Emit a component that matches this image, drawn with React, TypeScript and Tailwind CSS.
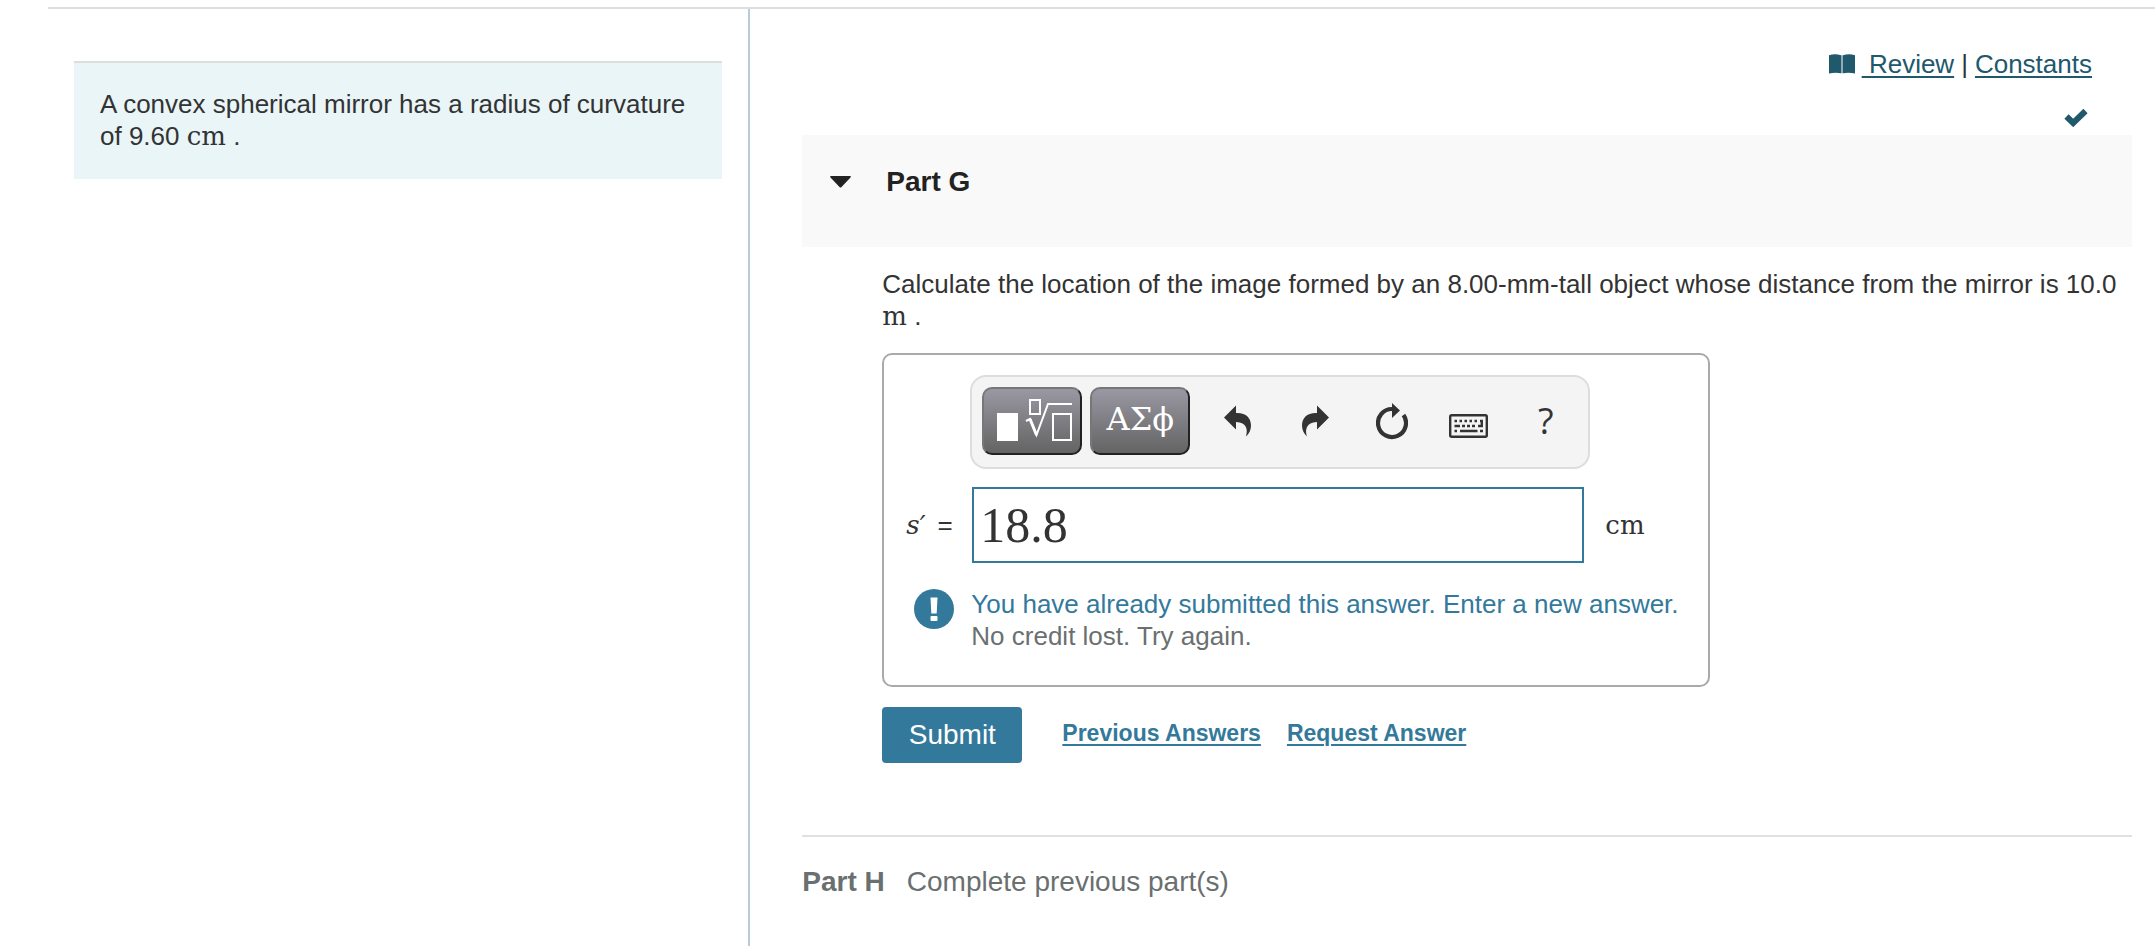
import { ReactNode, useState } from "react"

function Unit({ children }: { children: ReactNode }) {
  return <span className="font-['DejaVu_Serif',serif] text-[26px] leading-6">{children}</span>
}

function BookIcon() {
  return (
    <svg viewBox="0 0 26 20" className="h-5 w-[26px]" fill="#20586c" aria-hidden="true">
      <path d="M0 1.2Q6-.6 12 1.2V19.2Q6 18 0 19.6Z" />
      <path d="M14 1.2Q20-.6 26 1.2V19.6Q20 18 14 19.2Z" />
      <path d="M12 1.2H14V19.2H12Z" opacity="0.5" />
    </svg>
  )
}

function CheckIcon() {
  return (
    <svg viewBox="0 0 24 19" className="h-[19px] w-6" role="img" aria-label="Completed">
      <path d="M2.5 8.5L9.2 15L21.5 3" fill="none" stroke="#20586c" strokeWidth="6" strokeLinejoin="miter" />
    </svg>
  )
}

function TemplateIcon() {
  return (
    <svg viewBox="0 0 78 44" className="h-11 w-[78px]" fill="none" stroke="#fff" aria-hidden="true">
      <rect x="1" y="15" width="21" height="28" fill="#fff" stroke="none" />
      <rect x="34" y="2" width="10" height="14" strokeWidth="2" />
      <path d="M30 23L34 21L40.5 37L52 6H76" strokeWidth="2" />
      <path d="M34 21L40.5 37" strokeWidth="3" />
      <rect x="57" y="16" width="18" height="26" strokeWidth="2" />
    </svg>
  )
}

function UndoIcon() {
  return (
    <svg viewBox="0 0 28 32" className="h-8 w-7" fill="#333" aria-hidden="true">
      <path d="M0 12.5L12 .5V8C22 7.5 27 13 27 20.5C27 25 25 29 22 31.5C24 25 23 17.5 12 17V24.5Z" />
    </svg>
  )
}

function RedoIcon() {
  return (
    <svg viewBox="0 0 28 32" className="h-8 w-7" fill="#333" aria-hidden="true">
      <path d="M28 12.5L16 .5V8C6 7.5 1 13 1 20.5C1 25 3 29 6 31.5C4 25 5 17.5 16 17V24.5Z" />
    </svg>
  )
}

function ResetIcon() {
  return (
    <svg viewBox="0 0 32 38" className="h-[38px] w-8" aria-hidden="true">
      <path d="M16 7A14 14 0 1 0 27.5 13" fill="none" stroke="#333" strokeWidth="4.2" />
      <path d="M16 1L24 8.5L16 16Z" fill="#333" />
    </svg>
  )
}

function KeyboardIcon() {
  return (
    <svg viewBox="0 0 39 24" className="h-6 w-[39px]" aria-hidden="true">
      <rect x="1.2" y="1.2" width="36.6" height="21.6" rx="1.5" fill="none" stroke="#333" strokeWidth="2.4" />
      <path
        d="M5.5 7H8M10.5 7H13M15.5 7H18M20.5 7H23M25.5 7H28M31 7H34M5.5 12H11M13 12H16M18 12H21M23 12H26M29 12H34M5.5 17H8M11 17H28.5M31 17H34"
        stroke="#333"
        strokeWidth="2.4"
      />
      <path d="M32.8 6V13" stroke="#333" strokeWidth="2.4" />
    </svg>
  )
}

function AlertIcon() {
  return (
    <svg viewBox="0 0 40 40" className="h-10 w-10" aria-hidden="true">
      <circle cx="20" cy="20" r="20" fill="#33799b" />
      <path d="M16.5 8.5H23.5L22.7 24.5H17.3Z" fill="#fff" />
      <rect x="16.5" y="27" width="7" height="5" rx="1" fill="#fff" />
    </svg>
  )
}

const paletteButton =
  "flex h-[68px] w-[100px] items-center justify-center rounded-[10px] border-2 border-t-[#777] border-l-[#777] border-r-[#222] border-b-[#222] bg-linear-to-b from-[#9a98a3] to-[#646464] text-white"

const tools = [
  { label: "Undo", icon: <UndoIcon /> },
  { label: "Redo", icon: <RedoIcon /> },
  { label: "Reset", icon: <ResetIcon /> },
  { label: "Keyboard shortcuts", icon: <div className="pt-2.5"><KeyboardIcon /></div> },
  { label: "Help", icon: <span className="font-['Open_Sans',sans-serif] text-[36px] leading-9">?</span> },
]

function Toolbar() {
  return (
    <div className="ml-[86px] flex w-[620px] rounded-2xl border-2 border-[#ddd] bg-[#f4f4f4] px-2.5 pt-2.5 pb-3">
      <div className="flex gap-2">
        <button type="button" aria-label="Templates" className={paletteButton}>
          <div className="pb-0.5 pl-1.5">
            <TemplateIcon />
          </div>
        </button>
        <button type="button" aria-label="Greek symbols" className={paletteButton}>
          <span className="pb-1 font-['DejaVu_Serif',serif] text-[32px] leading-9">ΑΣϕ</span>
        </button>
      </div>
      <div className="ml-[9px] flex">
        {tools.map((tool) => (
          <button
            key={tool.label}
            type="button"
            aria-label={tool.label}
            className="flex h-[68px] w-[77px] items-center justify-center text-[#333]"
          >
            {tool.icon}
          </button>
        ))}
      </div>
    </div>
  )
}

function AnswerBox() {
  const [answer, setAnswer] = useState("18.8")

  return (
    <div className="mt-[21px] w-[828px] rounded-[10px] border-2 border-[#aaa] pt-5 pb-[33px]">
      <Toolbar />
      <div className="mt-[18px] flex items-center">
        <label htmlFor="answer" className="flex w-[88px] items-baseline gap-3 pl-[22px]">
          <span className="font-['DejaVu_Serif',serif] text-[26px] leading-8 italic">s′</span>
          <span>=</span>
        </label>
        <input
          id="answer"
          type="text"
          value={answer}
          onChange={(e) => setAnswer(e.target.value)}
          className="h-[76px] w-[612px] border-2 border-[#33799b] px-1.5 font-['Liberation_Serif',serif] text-[50px] outline-none"
        />
        <span className="pl-[21px]">
          <Unit>cm</Unit>
        </span>
      </div>
      <div className="mt-[25px] flex">
        <div className="w-[87px] pt-px pl-[30px]">
          <AlertIcon />
        </div>
        <div>
          <p className="text-[#33799b]">You have already submitted this answer. Enter a new answer.</p>
          <p className="text-[#6a7070]">No credit lost. Try again.</p>
        </div>
      </div>
    </div>
  )
}

export default function App() {
  return (
    <div className="bg-white pt-[7px] pl-12 font-['Liberation_Sans',Arial,sans-serif] text-[26px] leading-8 text-[#333]">
      <div className="flex min-h-[calc(100vh-7px)] border-t-2 border-[#dedede]">
        <aside className="w-1/3 shrink-0 border-r-2 border-[#b9cadb] pt-[52px] pr-[26px] pl-[26px]">
          <div className="border-t-2 border-[#dedede] bg-[#e9f5f7] px-[26px] pt-[25px] pb-[27px]">
            A convex spherical mirror has a radius of curvature of 9.60 <Unit>cm</Unit> .
          </div>
        </aside>

        <main className="min-w-0 flex-1 pt-[39px] pr-[23px] pl-[52px]">
          <div className="flex items-center justify-end gap-[7px] pr-10">
            <BookIcon />
            <a href="#review" className="text-[#20586c] underline decoration-2 underline-offset-3">
              &nbsp;Review
            </a>
            <span>|</span>
            <a href="#constants" className="text-[#20586c] underline decoration-2 underline-offset-3">
              Constants
            </a>
          </div>
          <div className="flex h-[55px] items-end justify-end pr-11 pb-2">
            <CheckIcon />
          </div>

          <section>
            <h2 className="bg-[#f9f9f9] pt-[31px] pr-7 pb-[49px] pl-7 text-[28px] font-bold text-[#222]">
              <button type="button" aria-expanded="true" className="flex items-center gap-[35px]">
                <svg viewBox="0 0 21 12" className="h-3 w-[21px]" fill="#222" aria-hidden="true">
                  <path d="M1 0H20Q21.5.5 20.5 1.5L11.5 11Q10.5 12 9.5 11L.5 1.5Q-.5.5 1 0Z" />
                </svg>
                Part G
              </button>
            </h2>
            <div className="pt-[21px] pl-20">
              <p>
                Calculate the location of the image formed by an 8.00-mm-tall object whose distance from the mirror is
                10.0 <Unit>m</Unit> .
              </p>
              <AnswerBox />
              <div className="mt-5 flex items-center">
                <button type="button" className="h-14 w-[140px] rounded bg-[#33799b] text-[28px] text-white">
                  Submit
                </button>
                <div className="ml-10 flex gap-[26px] pb-1 text-[23px] font-bold text-[#33799b]">
                  <a href="#previous" className="underline decoration-2 underline-offset-3">
                    Previous Answers
                  </a>
                  <a href="#request" className="underline decoration-2 underline-offset-3">
                    Request Answer
                  </a>
                </div>
              </div>
            </div>
          </section>

          <section className="mt-[72px] flex gap-[22px] border-t-2 border-[#dfe1e1] pt-[29px] text-[28px] text-[#6a7070]">
            <h2 className="font-bold">Part H</h2>
            <p>Complete previous part(s)</p>
          </section>
        </main>
      </div>
    </div>
  )
}
